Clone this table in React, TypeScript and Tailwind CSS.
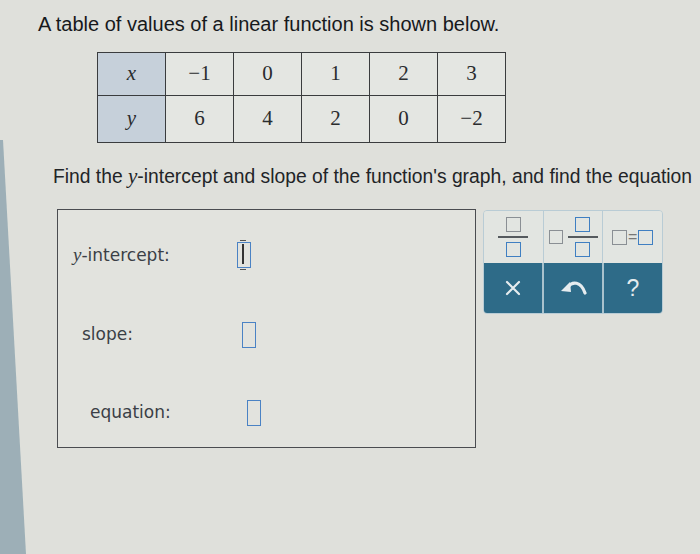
import { ReactNode } from "react";

const xs = ["\u22121", "0", "1", "2", "3"];
const ys = ["6", "4", "2", "0", "\u22122"];

function Blank({ tone = "blue", size = "md" }: { tone?: "blue" | "grey"; size?: "md" | "sm" }) {
  const color = tone === "blue" ? "border-[#3f7fc2]" : "border-[#8a8f94]";
  const dims = size === "md" ? "w-[15px] h-[15px]" : "w-[14px] h-[14px]";
  return <span className={`block ${dims} border-[1.5px] ${color}`} />;
}

function Frac({ top, bottom }: { top: "blue" | "grey"; bottom: "blue" | "grey" }) {
  return (
    <span className="flex flex-col items-center gap-[4px]">
      <Blank tone={top} />
      <span className="block w-[30px] h-[1.5px] bg-[#555a5e]" />
      <Blank tone={bottom} />
    </span>
  );
}

function AnswerBox({ cursor }: { cursor?: boolean }) {
  return (
    <span className="relative block w-[14px] h-[26px] border-[1.5px] border-[#4a82c4]">
      {cursor && (
        <>
          <span className="absolute left-[4px] top-[1px] w-[1.5px] h-[20px] bg-[#333]" />
          <span className="absolute left-[2px] -top-[3px] w-[6px] h-[1px] bg-[#555]" />
          <span className="absolute left-[2px] -bottom-[3px] w-[6px] h-[1px] bg-[#555]" />
        </>
      )}
    </span>
  );
}

function Row({ pad, labelW, children, cursor, top }: { pad: string; labelW: string; children: ReactNode; cursor?: boolean; top: string }) {
  return (
    <div className={`flex items-center ${pad} ${top}`}>
      <div className={`${labelW} text-[17px] text-[#3b3f46] font-['DejaVu_Sans',sans-serif]`}>{children}</div>
      <AnswerBox cursor={cursor} />
    </div>
  );
}

export default function App() {
  return (
    <div className="relative w-[700px] h-[554px] overflow-hidden bg-[#dfe0db] font-['Liberation_Sans',Arial,sans-serif] text-[#1d1f22]">
      {/* screen edge */}
      <svg className="absolute left-0 top-0" width="30" height="554" viewBox="0 0 30 554">
        <polygon points="0,140 3,140 26,554 0,554" fill="#9dafb7" />
      </svg>

      <h1 className="pl-[38px] pt-[11px] text-[20px] leading-[26px] text-[#17191c]">
        A table of values of a linear function is shown below.
      </h1>

      <table className="ml-[97px] mt-[15px] border-collapse font-['Liberation_Serif',serif] text-[21px] text-[#2a2c2e]">
        <tbody>
          <tr className="h-[43px]">
            <td className="w-[68px] border border-[#3a3c3e] bg-[#c6d0da] text-center italic">x</td>
            {xs.map((v) => (
              <td key={v} className="w-[68px] border border-[#3a3c3e] bg-[#e4e6e2] text-center">{v}</td>
            ))}
          </tr>
          <tr className="h-[47px]">
            <td className="border border-[#3a3c3e] bg-[#c6d0da] text-center italic">y</td>
            {ys.map((v) => (
              <td key={v} className="border border-[#3a3c3e] bg-[#e4e6e2] text-center">{v}</td>
            ))}
          </tr>
        </tbody>
      </table>

      <p className="pl-[53px] mt-[21px] text-[19.3px] leading-[24px] whitespace-nowrap text-[#222427]">
        Find the <span className="font-['Liberation_Serif',serif] italic text-[21px]">y</span>-intercept and slope of the function's graph, and find the equation
      </p>

      <div className="flex items-start mt-[20px]">
        <div className="ml-[57px] w-[419px] h-[239px] border-[1.5px] border-[#4a4c50] bg-[#e2e3de]">
          <Row pad="pl-[15px]" labelW="w-[164px]" top="mt-[31px]" cursor>
            <span className="font-['Liberation_Serif',serif] italic text-[19px]">y</span>-intercept:
          </Row>
          <Row pad="pl-[24px]" labelW="w-[160px]" top="mt-[52px]">slope:</Row>
          <Row pad="pl-[32px]" labelW="w-[157px]" top="mt-[52px]">equation:</Row>
        </div>

        <div className="ml-[7px] mt-[1px] w-[180px] rounded-[4px] border border-[#b9ccd5] overflow-hidden">
          <div className="flex h-[52px] bg-[#e2e5e1]">
            <div className="flex-1 flex items-center justify-center border-r border-[#b9ccd5]">
              <Frac top="grey" bottom="blue" />
            </div>
            <div className="flex-1 flex items-center justify-center gap-[5px] border-r border-[#b9ccd5]">
              <Blank tone="grey" size="sm" />
              <Frac top="blue" bottom="blue" />
            </div>
            <div className="flex-1 flex items-center justify-center gap-[1px]">
              <Blank tone="grey" />
              <span className="text-[16px] leading-none text-[#777]">=</span>
              <Blank tone="blue" />
            </div>
          </div>
          <div className="flex h-[50px] bg-[#2e6b88] text-[#e8eef1]">
            <div className="flex-1 flex items-center justify-center border-r-2 border-[#a9c2cd]">
              <svg width="16" height="16" viewBox="0 0 16 16">
                <path d="M2 2 L14 14 M14 2 L2 14" stroke="#e6ecef" strokeWidth="2.2" strokeLinecap="round" />
              </svg>
            </div>
            <div className="flex-1 flex items-center justify-center border-r-2 border-[#a9c2cd]">
              <svg width="28" height="18" viewBox="0 0 28 18">
                <path d="M9 8 C13 2, 22 2, 26 14" stroke="#e6ecef" strokeWidth="3.2" fill="none" strokeLinecap="round" />
                <path d="M2 12 L11 3 L12 13 Z" fill="#e6ecef" />
              </svg>
            </div>
            <div className="flex-1 flex items-center justify-center text-[23px] text-[#e6ecef]">?</div>
          </div>
        </div>
      </div>
    </div>
  );
}
